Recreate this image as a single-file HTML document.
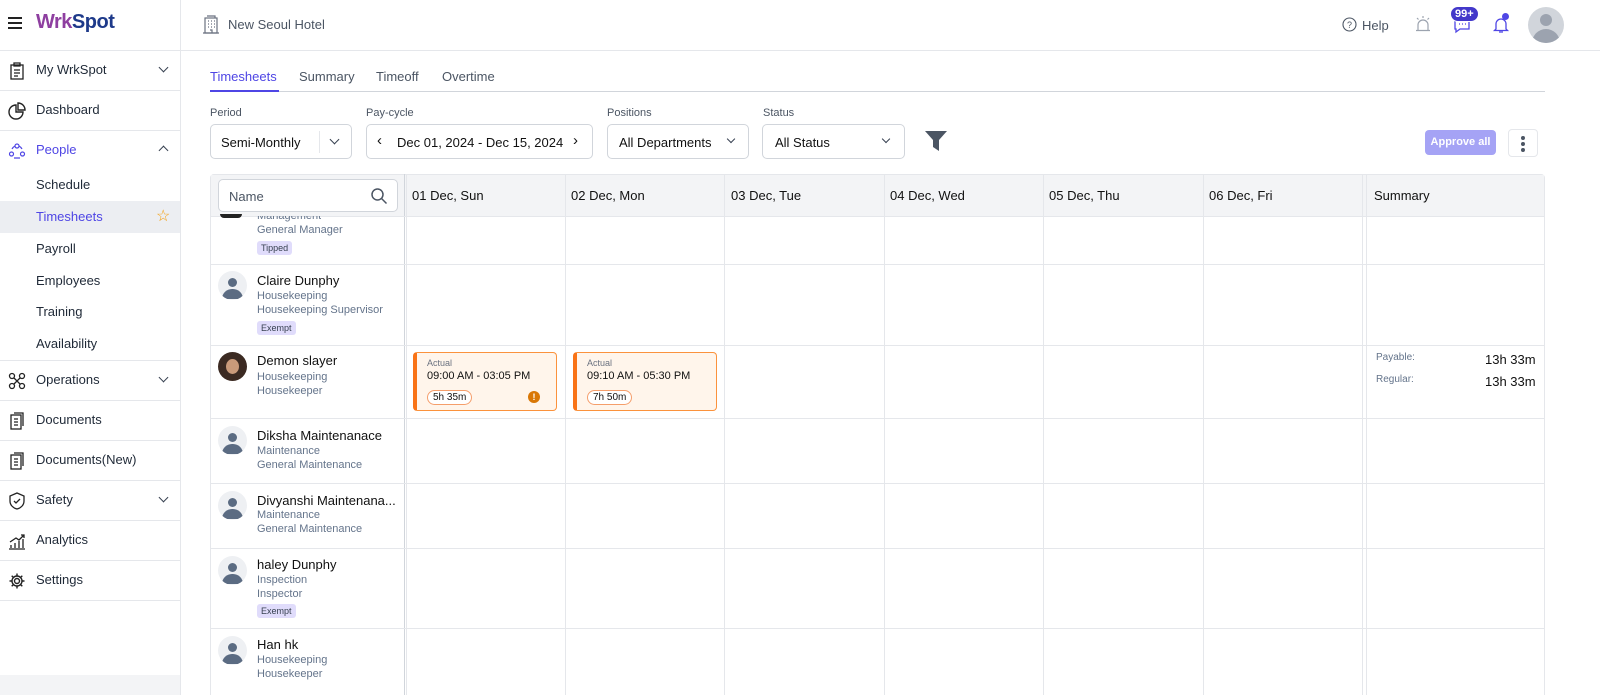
<!DOCTYPE html>
<html><head><meta charset="utf-8"><style>
*{box-sizing:border-box;margin:0;padding:0}
body{width:1600px;height:695px;overflow:hidden;background:#fff;font-family:"Liberation Sans",sans-serif;color:#111;position:relative;font-size:13px}
.a{position:absolute}
.sb{left:0;top:0;width:181px;height:695px;border-right:1px solid #e5e7eb;background:#fff}
.nav{position:absolute;left:0;width:180px;font-size:13px;color:#1f2937}
.nav .ic{position:absolute;left:8px;width:18px;height:18px}
.nav .t{position:absolute;left:36px}
.hl{position:absolute;left:0;width:180px;height:1px;background:#e5e7eb}
.chev{position:absolute;left:160px;width:7px;height:7px;border-right:1.5px solid #374151;border-bottom:1.5px solid #374151;transform:rotate(45deg)}
.lbl{font-size:11px;color:#4b5563}
.box{border:1px solid #d1d5db;border-radius:5px;background:#fff;height:35px}
.vl{position:absolute;top:174px;width:1px;height:521px;background:#e5e7eb}
.hr{position:absolute;left:210px;width:1335px;height:1px;background:#e5e7eb}
.day{position:absolute;top:188px;font-size:13px;color:#111}
.nm{position:absolute;left:257px;font-size:13px;color:#111}
.sub{position:absolute;left:257px;font-size:11px;color:#64748b;line-height:14px}
.tag{position:absolute;left:257px;font-size:9px;color:#374151;background:#e0dcfb;border-radius:3px;padding:2px 4px}
.av{position:absolute;left:218px;width:29px;height:29px;border-radius:50%;background:#eef0f3;overflow:hidden}
.av:before{content:"";position:absolute;left:10px;top:7px;width:9px;height:9px;border-radius:50%;background:#5b6b82}
.av:after{content:"";position:absolute;left:4px;top:18px;width:21px;height:10px;border-radius:10px 10px 0 0;background:#5b6b82}
.card{position:absolute;top:352px;width:144px;height:59px;background:#fff5eb;border:1px solid #fb923c;border-left:4px solid #f97316;border-radius:4px}
.card .x{position:absolute;left:10px;top:5px;font-size:9px;color:#6b7280}
.card .y{position:absolute;left:10px;top:17px;font-size:11px;color:#111}
.card .z{position:absolute;left:10px;top:37px;font-size:10px;border:1px solid #f59e6b;border-radius:9px;padding:1px 5px;background:#fff}
</style></head><body>
<div class="a sb"></div>
<!-- top header -->
<div class="a" style="left:8px;top:17px;width:14px;height:2px;background:#222;box-shadow:0 5px 0 #222,0 10px 0 #222"></div>
<div class="a" style="left:36px;top:11px;font-size:20px;font-weight:bold;letter-spacing:-0.5px"><span style="color:#8e3fa0">Wrk</span><span style="color:#1e3a8a">Spot</span></div>
<div class="a" style="left:181px;top:50px;width:1419px;height:1px;background:#e5e7eb"></div>
<div class="a" style="left:0;top:50px;width:181px;height:1px;background:#e5e7eb"></div>
<svg class="a" style="left:203px;top:15px" width="16" height="19" viewBox="0 0 16 19" fill="none" stroke="#6b7280" stroke-width="1.2"><rect x="2" y="3" width="12" height="15"/><path d="M0 18h16M4 1h8v2M5 6h1M8 6h1M11 6h1M5 9h1M8 9h1M11 9h1M5 12h1M8 12h1M11 12h1M7 15h2v3"/></svg>
<div class="a" style="left:228px;top:17px;font-size:13px;color:#4b5563">New Seoul Hotel</div>
<svg class="a" style="left:1342px;top:17px" width="15" height="15" viewBox="0 0 15 15"><circle cx="7.5" cy="7.5" r="6.5" fill="none" stroke="#4b5563" stroke-width="1.1"/><text x="7.5" y="11" font-size="9" text-anchor="middle" fill="#4b5563" font-family="Liberation Sans">?</text></svg>
<div class="a" style="left:1362px;top:18px;font-size:13px;color:#4b5563">Help</div>
<svg class="a" style="left:1414px;top:15px" width="18" height="18" viewBox="0 0 18 18" fill="none" stroke="#9ca3af" stroke-width="1.2"><path d="M4 15V10a5 5 0 0 1 10 0v5M2 15.5h14M9 1v2M3 3l1.5 1.5M15 3l-1.5 1.5"/></svg>
<svg class="a" style="left:1453px;top:17px" width="18" height="17" viewBox="0 0 18 17" fill="none" stroke="#4f46e5" stroke-width="1.3"><path d="M2 2h14v10H7l-4 3v-3H2z"/><path d="M6 7h1M9 7h1M12 7h1"/></svg>
<div class="a" style="left:1450px;top:6px;background:#4338ca;color:#fff;font-size:11px;font-weight:bold;border-radius:9px;padding:1px 4px;border:1px solid #fff">99+</div>
<svg class="a" style="left:1492px;top:15px" width="18" height="19" viewBox="0 0 18 19" fill="none" stroke="#4f46e5" stroke-width="1.3"><path d="M4 14V9a5 5 0 0 1 10 0v5l1.5 1.5h-13zM7 17h4"/></svg>
<div class="a" style="left:1502px;top:13px;width:7px;height:7px;border-radius:50%;background:#4f46e5"></div>
<div class="a" style="left:1528px;top:7px;width:36px;height:36px;border-radius:50%;background:#d1d5db;overflow:hidden"><div class="a" style="left:12px;top:7px;width:12px;height:12px;border-radius:50%;background:#9ca3af"></div><div class="a" style="left:4px;top:22px;width:28px;height:18px;border-radius:14px 14px 0 0;background:#9ca3af"></div></div>

<!-- sidebar nav -->
<div class="nav" style="top:62px"><svg class="ic" viewBox="0 0 18 18" fill="none" stroke="#222" stroke-width="1.3"><rect x="3" y="3" width="12" height="14"/><path d="M6 1h6v3H6zM6 8h6M6 11h6M6 14h4"/></svg><span class="t">My WrkSpot</span><span class="chev" style="top:2px"></span></div>
<div class="hl" style="top:90px"></div>
<div class="nav" style="top:102px"><svg class="ic" viewBox="0 0 18 18" fill="none" stroke="#222" stroke-width="1.4"><path d="M8 3a7 7 0 1 0 7 7H8z"/><path d="M10 1v7h7a7 7 0 0 0-7-7z"/></svg><span class="t">Dashboard</span></div>
<div class="hl" style="top:130px"></div>
<div class="nav" style="top:142px;color:#4f46e5"><svg class="ic" viewBox="0 0 18 18" fill="none" stroke="#4f46e5" stroke-width="1.2"><circle cx="9" cy="4" r="2"/><circle cx="3.5" cy="12" r="2"/><circle cx="14.5" cy="12" r="2"/><path d="M4 7a7 7 0 0 1 3-3M14 7a7 7 0 0 0-3-3M6 16h6"/></svg><span class="t">People</span><span class="chev" style="top:5px;transform:rotate(225deg)"></span></div>
<div class="nav" style="top:177px"><span class="t">Schedule</span></div>
<div class="a" style="left:0;top:201px;width:180px;height:32px;background:#eceef2"></div>
<div class="nav" style="top:209px;color:#4f46e5"><span class="t">Timesheets</span><span class="a" style="left:156px;top:-3px;color:#f59e0b;font-size:16px">☆</span></div>
<div class="nav" style="top:241px"><span class="t">Payroll</span></div>
<div class="nav" style="top:273px"><span class="t">Employees</span></div>
<div class="nav" style="top:304px"><span class="t">Training</span></div>
<div class="nav" style="top:336px"><span class="t">Availability</span></div>
<div class="hl" style="top:360px"></div>
<div class="nav" style="top:372px"><svg class="ic" viewBox="0 0 18 18" fill="none" stroke="#222" stroke-width="1.3"><circle cx="4" cy="4" r="2.5"/><circle cx="14" cy="4" r="2.5"/><circle cx="4" cy="14" r="2.5"/><circle cx="14" cy="14" r="2.5"/><path d="M6 6l6 6M12 6l-6 6"/></svg><span class="t">Operations</span><span class="chev" style="top:2px"></span></div>
<div class="hl" style="top:400px"></div>
<div class="nav" style="top:412px"><svg class="ic" viewBox="0 0 18 18" fill="none" stroke="#222" stroke-width="1.3"><rect x="3" y="3" width="10" height="14"/><path d="M6 1h9v13M6 7h4M6 10h4M6 13h4"/></svg><span class="t">Documents</span></div>
<div class="hl" style="top:440px"></div>
<div class="nav" style="top:452px"><svg class="ic" viewBox="0 0 18 18" fill="none" stroke="#222" stroke-width="1.3"><rect x="3" y="3" width="10" height="14"/><path d="M6 1h9v13M6 7h4M6 10h4M6 13h4"/></svg><span class="t">Documents(New)</span></div>
<div class="hl" style="top:480px"></div>
<div class="nav" style="top:492px"><svg class="ic" viewBox="0 0 18 18" fill="none" stroke="#222" stroke-width="1.3"><path d="M9 1l7 3v5c0 4-3 7-7 8-4-1-7-4-7-8V4z"/><path d="M6 9l2 2 4-4"/></svg><span class="t">Safety</span><span class="chev" style="top:2px"></span></div>
<div class="hl" style="top:520px"></div>
<div class="nav" style="top:532px"><svg class="ic" viewBox="0 0 18 18" fill="none" stroke="#222" stroke-width="1.3"><path d="M1 17h16M3 16v-3M7 16v-5M11 16v-7M15 16V7M2 10l6-4 3 2 5-5M13 3h3v3"/></svg><span class="t">Analytics</span></div>
<div class="hl" style="top:560px"></div>
<div class="nav" style="top:572px"><svg class="ic" viewBox="0 0 18 18" fill="none" stroke="#222" stroke-width="1.4"><circle cx="9" cy="9" r="2.5"/><path d="M9 1.5v2.5M9 14v2.5M1.5 9H4M14 9h2.5M3.7 3.7l1.8 1.8M12.5 12.5l1.8 1.8M3.7 14.3l1.8-1.8M12.5 5.5l1.8-1.8"/><circle cx="9" cy="9" r="5"/></svg><span class="t">Settings</span></div>
<div class="hl" style="top:600px"></div>
<div class="a" style="left:0;top:675px;width:180px;height:20px;background:#f3f4f6"></div>

<!-- tabs -->
<div class="a" style="left:210px;top:69px;font-size:13px;color:#4f46e5">Timesheets</div>
<div class="a" style="left:299px;top:69px;font-size:13px;color:#4b5563">Summary</div>
<div class="a" style="left:376px;top:69px;font-size:13px;color:#4b5563">Timeoff</div>
<div class="a" style="left:442px;top:69px;font-size:13px;color:#4b5563">Overtime</div>
<div class="a" style="left:210px;top:91px;width:1335px;height:1px;background:#d1d5db"></div>
<div class="a" style="left:210px;top:90px;width:69px;height:2px;background:#4f46e5"></div>

<!-- filters -->
<div class="a lbl" style="left:210px;top:107px">Period</div>
<div class="a box" style="left:210px;top:124px;width:142px"><span class="a" style="left:10px;top:10px;font-size:13px">Semi-Monthly</span><span class="a" style="left:108px;top:6px;width:1px;height:22px;background:#e5e7eb"></span><span class="chev" style="left:120px;top:11px"></span></div>
<div class="a lbl" style="left:366px;top:107px">Pay-cycle</div>
<div class="a box" style="left:366px;top:124px;width:227px"><span class="a" style="left:10px;top:7px;font-size:15px">‹</span><span class="a" style="left:30px;top:10px;font-size:13px">Dec 01, 2024 - Dec 15, 2024</span><span class="a" style="left:206px;top:7px;font-size:15px">›</span></div>
<div class="a lbl" style="left:607px;top:107px">Positions</div>
<div class="a box" style="left:607px;top:124px;width:142px"><span class="a" style="left:11px;top:10px;font-size:13px">All Departments</span><span class="chev" style="left:120px;top:11px;width:6px;height:6px;border-width:1.2px"></span></div>
<div class="a lbl" style="left:763px;top:107px">Status</div>
<div class="a box" style="left:762px;top:124px;width:143px"><span class="a" style="left:12px;top:10px;font-size:13px">All Status</span><span class="chev" style="left:120px;top:11px;width:6px;height:6px;border-width:1.2px"></span></div>
<svg class="a" style="left:925px;top:131px" width="22" height="20" viewBox="0 0 22 20"><path d="M0 0h22l-8 9v11l-6-4V9z" fill="#4b5563"/></svg>
<div class="a" style="left:1425px;top:130px;width:71px;height:25px;background:#a5a3f5;border-radius:4px;color:#fff;font-size:11px;font-weight:bold;text-align:center;line-height:25px">Approve all</div>
<div class="a" style="left:1508px;top:129px;width:30px;height:28px;border:1px solid #e5e7eb;border-radius:4px"><div class="a" style="left:12px;top:6px;width:4px;height:4px;border-radius:50%;background:#4b5563;box-shadow:0 6px 0 #4b5563,0 12px 0 #4b5563"></div></div>

<!-- table -->
<div class="a" style="left:210px;top:174px;width:1335px;height:521px;border:1px solid #e5e7eb;border-bottom:none;border-radius:4px 4px 0 0"></div>
<div class="a" style="left:211px;top:175px;width:1333px;height:41px;background:#f3f4f6"></div>
<div class="a" style="left:218px;top:179px;width:180px;height:33px;background:#fff;border:1px solid #d1d5db;border-radius:5px"><span class="a" style="left:10px;top:9px;font-size:13px;color:#4b5563">Name</span>
<svg class="a" style="left:151px;top:7px" width="18" height="18" viewBox="0 0 18 18" fill="none" stroke="#4b5563" stroke-width="1.5"><circle cx="7.5" cy="7.5" r="5.5"/><path d="M11.5 11.5l5 5"/></svg></div>
<div class="vl" style="left:404px;background:#d1d5db"></div><div class="vl" style="left:406px"></div>
<div class="vl" style="left:565px"></div><div class="vl" style="left:724px"></div><div class="vl" style="left:884px"></div><div class="vl" style="left:1043px"></div><div class="vl" style="left:1203px"></div><div class="vl" style="left:1362px"></div><div class="vl" style="left:1366px"></div>
<div class="day" style="left:412px">01 Dec, Sun</div><div class="day" style="left:571px">02 Dec, Mon</div><div class="day" style="left:731px">03 Dec, Tue</div><div class="day" style="left:890px">04 Dec, Wed</div><div class="day" style="left:1049px">05 Dec, Thu</div><div class="day" style="left:1209px">06 Dec, Fri</div><div class="day" style="left:1374px">Summary</div>
<div class="hr" style="top:216px"></div><div class="hr" style="top:264px"></div><div class="hr" style="top:345px"></div><div class="hr" style="top:418px"></div><div class="hr" style="top:483px"></div><div class="hr" style="top:548px"></div><div class="hr" style="top:628px"></div>

<!-- row 0 partial -->
<div class="a" style="left:220px;top:214px;width:22px;height:4px;border-radius:0 0 11px 11px;background:#222"></div>
<div class="sub" style="top:216px;height:7px;overflow:hidden;line-height:0">Management</div>
<div class="sub" style="top:223px">General Manager</div>
<div class="tag" style="top:241px">Tipped</div>
<!-- rows -->
<div class="av" style="top:271px"></div><div class="nm" style="top:273px">Claire Dunphy</div><div class="sub" style="top:289px">Housekeeping</div><div class="sub" style="top:303px">Housekeeping Supervisor</div><div class="tag" style="top:321px">Exempt</div>
<div class="a" style="left:218px;top:352px;width:29px;height:29px;border-radius:50%;background:#3b2a22"><div class="a" style="left:8px;top:7px;width:13px;height:15px;border-radius:50%;background:#c99a7a"></div></div><div class="nm" style="top:353px">Demon slayer</div><div class="sub" style="top:370px">Housekeeping</div><div class="sub" style="top:384px">Housekeeper</div>
<div class="av" style="top:426px"></div><div class="nm" style="top:428px">Diksha Maintenanace</div><div class="sub" style="top:444px">Maintenance</div><div class="sub" style="top:458px">General Maintenance</div>
<div class="av" style="top:491px"></div><div class="nm" style="top:493px">Divyanshi Maintenana...</div><div class="sub" style="top:508px">Maintenance</div><div class="sub" style="top:522px">General Maintenance</div>
<div class="av" style="top:556px"></div><div class="nm" style="top:557px">haley Dunphy</div><div class="sub" style="top:573px">Inspection</div><div class="sub" style="top:587px">Inspector</div><div class="tag" style="top:604px">Exempt</div>
<div class="av" style="top:636px"></div><div class="nm" style="top:637px">Han hk</div><div class="sub" style="top:653px">Housekeeping</div><div class="sub" style="top:667px">Housekeeper</div>

<!-- cards -->
<div class="card" style="left:413px"><span class="x">Actual</span><span class="y">09:00 AM - 03:05 PM</span><span class="z">5h 35m</span><span class="a" style="left:111px;top:38px;width:12px;height:12px;border-radius:50%;background:#d97706;color:#fff;font-size:9px;font-weight:bold;text-align:center;line-height:12px">!</span></div>
<div class="card" style="left:573px"><span class="x">Actual</span><span class="y">09:10 AM - 05:30 PM</span><span class="z">7h 50m</span></div>
<div class="a" style="left:1376px;top:352px;font-size:10px;color:#64748b">Payable:</div><div class="a" style="left:1485px;top:352px;font-size:13px">13h 33m</div>
<div class="a" style="left:1376px;top:374px;font-size:10px;color:#64748b">Regular:</div><div class="a" style="left:1485px;top:374px;font-size:13px">13h 33m</div>
</body></html>
